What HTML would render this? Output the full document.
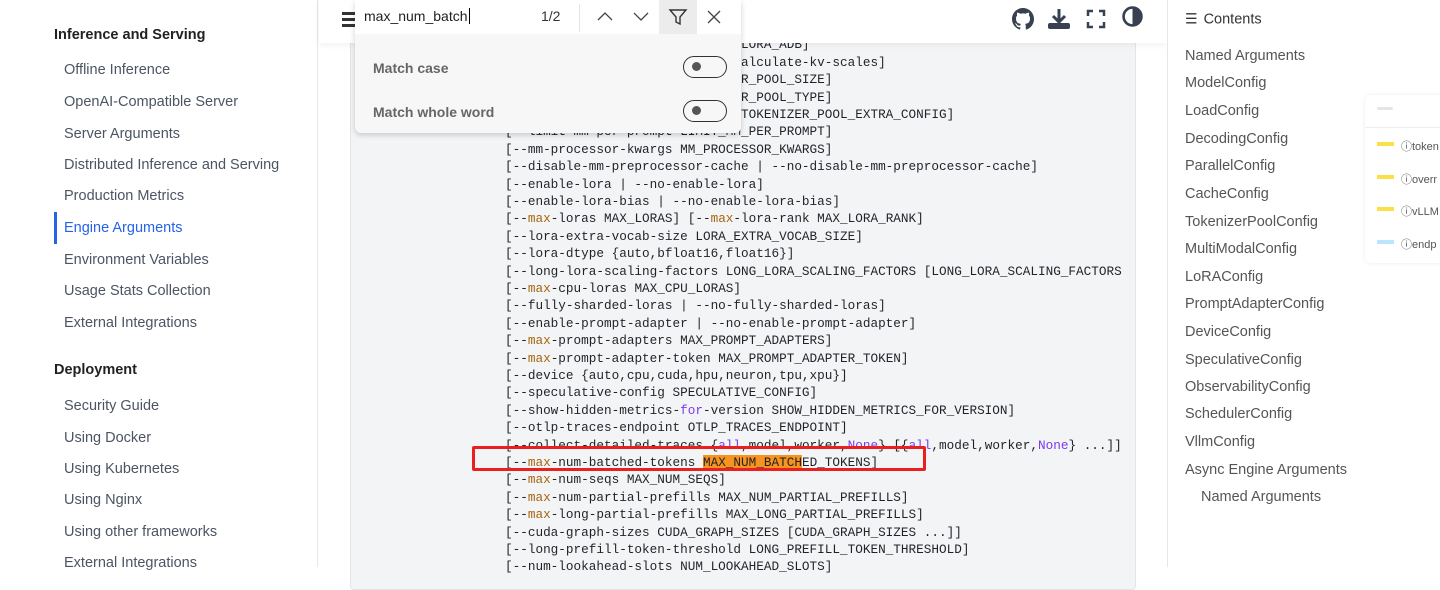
<!DOCTYPE html>
<html><head><meta charset="utf-8"><style>
*{margin:0;padding:0;box-sizing:border-box}
body{width:1440px;height:567px;overflow:hidden;background:#fff;font-family:"Liberation Sans",sans-serif;position:relative}
.side{position:absolute;left:0;top:0;width:318px;height:567px;border-right:1px solid #e5e7eb}
.side div{position:absolute;font-size:14.5px;color:#4b5563;white-space:nowrap;transform:translateY(-50%)}
.side .h{left:54px;font-weight:bold;color:#222}
.side .i{left:64px}
.side .a{color:#2563eb}
.bar{position:absolute;left:54px;top:212px;width:3px;height:32px;background:#2563eb}
.code{position:absolute;left:350px;top:30px;width:786px;height:560px;background:#f3f4f6;border:1px solid #e2e4e8;border-radius:4px}
pre{position:absolute;left:505px;top:36.3px;font-family:"Liberation Mono",monospace;font-size:12.7px;line-height:17.4px;color:#1f2328}
.m{color:#a6640f}.p{color:#7c3aed}
.hl{background:#f7931e}
.head{position:absolute;left:319px;top:0;width:848px;height:43px;background:#fff;box-shadow:0 2px 6px rgba(0,0,0,.06)}
.toc{position:absolute;left:1167px;top:0;width:273px;height:567px;border-left:1px solid #e5e7eb;background:#fff}
.toc div{position:absolute;left:17px;font-size:14.5px;color:#555;white-space:nowrap;transform:translateY(-50%)}
.pop{position:absolute;left:355px;top:0;width:386px;height:133px;background:#f7f7f7;box-shadow:0 2px 6px rgba(0,0,0,.18);border-radius:0 0 6px 6px}
.pop .top{position:absolute;left:0;top:0;width:386px;height:34px;background:#fff}
.tog{position:absolute;left:328px;width:44px;height:22px;border:1.5px solid #333;border-radius:11px}
.tog:after{content:"";position:absolute;left:8px;top:5px;width:9px;height:9px;border-radius:50%;background:#555}
.float{position:absolute;left:1365px;top:95px;width:80px;height:168px;background:#fff;border-radius:6px;box-shadow:0 0 4px rgba(0,0,0,.08)}
</style></head><body>
<div class="side">
<div class="h" style="top:35px">Inference and Serving</div>
<div class="i" style="top:70px">Offline Inference</div>
<div class="i" style="top:102px">OpenAI-Compatible Server</div>
<div class="i" style="top:134px">Server Arguments</div>
<div class="i" style="top:165px">Distributed Inference and Serving</div>
<div class="i" style="top:196px">Production Metrics</div>
<div class="i a" style="top:228px">Engine Arguments</div>
<div class="i" style="top:260px">Environment Variables</div>
<div class="i" style="top:291px">Usage Stats Collection</div>
<div class="i" style="top:323px">External Integrations</div>
<div class="h" style="top:370px">Deployment</div>
<div class="i" style="top:406px">Security Guide</div>
<div class="i" style="top:438px">Using Docker</div>
<div class="i" style="top:469px">Using Kubernetes</div>
<div class="i" style="top:500px">Using Nginx</div>
<div class="i" style="top:532px">Using other frameworks</div>
<div class="i" style="top:563px">External Integrations</div>
</div>
<div class="bar"></div>
<div class="code"></div>
<pre>[--qlora-adapter-name-or-path QLORA_ADB]
[--calculate-kv-scales | --no-calculate-kv-scales]
[--tokenizer-pool-size TOKENIZER_POOL_SIZE]
[--tokenizer-pool-type TOKENIZER_POOL_TYPE]
[--tokenizer-pool-extra-config TOKENIZER_POOL_EXTRA_CONFIG]
[--limit-mm-per-prompt LIMIT_MM_PER_PROMPT]
[--mm-processor-kwargs MM_PROCESSOR_KWARGS]
[--disable-mm-preprocessor-cache | --no-disable-mm-preprocessor-cache]
[--enable-lora | --no-enable-lora]
[--enable-lora-bias | --no-enable-lora-bias]
[--<span class="m">max</span>-loras MAX_LORAS] [--<span class="m">max</span>-lora-rank MAX_LORA_RANK]
[--lora-extra-vocab-size LORA_EXTRA_VOCAB_SIZE]
[--lora-dtype {auto,bfloat16,float16}]
[--long-lora-scaling-factors LONG_LORA_SCALING_FACTORS [LONG_LORA_SCALING_FACTORS
[--<span class="m">max</span>-cpu-loras MAX_CPU_LORAS]
[--fully-sharded-loras | --no-fully-sharded-loras]
[--enable-prompt-adapter | --no-enable-prompt-adapter]
[--<span class="m">max</span>-prompt-adapters MAX_PROMPT_ADAPTERS]
[--<span class="m">max</span>-prompt-adapter-token MAX_PROMPT_ADAPTER_TOKEN]
[--device {auto,cpu,cuda,hpu,neuron,tpu,xpu}]
[--speculative-config SPECULATIVE_CONFIG]
[--show-hidden-metrics-<span class="p">for</span>-version SHOW_HIDDEN_METRICS_FOR_VERSION]
[--otlp-traces-endpoint OTLP_TRACES_ENDPOINT]
[--collect-detailed-traces {<span class="p">all</span>,model,worker,<span class="p">None</span>} [{<span class="p">all</span>,model,worker,<span class="p">None</span>} ...]]
[--<span class="m">max</span>-num-batched-tokens <span class="hl">MAX_NUM_BATCH</span>ED_TOKENS]
[--<span class="m">max</span>-num-seqs MAX_NUM_SEQS]
[--<span class="m">max</span>-num-partial-prefills MAX_NUM_PARTIAL_PREFILLS]
[--<span class="m">max</span>-long-partial-prefills MAX_LONG_PARTIAL_PREFILLS]
[--cuda-graph-sizes CUDA_GRAPH_SIZES [CUDA_GRAPH_SIZES ...]]
[--long-prefill-token-threshold LONG_PREFILL_TOKEN_THRESHOLD]
[--num-lookahead-slots NUM_LOOKAHEAD_SLOTS]</pre>
<div style="position:absolute;left:472px;top:446px;width:454px;height:25px;border:3px solid #e8201f;border-radius:2px"></div>
<div class="head">
<div style="position:absolute;left:23px;top:12px;width:13px;height:2.5px;background:#333;box-shadow:0 6px 0 #333,0 12px 0 #333"></div>
<svg style="position:absolute;left:693px;top:8px" width="22" height="22" viewBox="0 0 16 16"><path fill="#374151" d="M8 0C3.58 0 0 3.58 0 8c0 3.54 2.29 6.53 5.47 7.59.4.07.55-.17.55-.38v-1.34c-2.23.48-2.7-1.07-2.7-1.07-.36-.92-.89-1.17-.89-1.17-.73-.5.05-.49.05-.49.8.06 1.23.82 1.23.82.72 1.23 1.88.87 2.34.67.07-.52.28-.87.51-1.07-1.78-.2-3.64-.89-3.64-3.95 0-.87.31-1.59.82-2.15-.08-.2-.36-1.02.08-2.12 0 0 .67-.21 2.2.82a7.6 7.6 0 014 0c1.53-1.04 2.2-.82 2.2-.82.44 1.1.16 1.92.08 2.12.51.56.82 1.27.82 2.15 0 3.07-1.87 3.75-3.65 3.95.29.25.54.73.54 1.48v2.2c0 .21.15.46.55.38A8 8 0 0016 8c0-4.42-3.58-8-8-8z"/></svg>
<svg style="position:absolute;left:728px;top:8px" width="24" height="22" viewBox="0 0 24 22"><path d="M12 1v13M6 8l6 6 6-6" stroke="#374151" stroke-width="3" fill="none"/><rect x="1" y="15" width="22" height="6" rx="2" fill="#374151"/></svg>
<svg style="position:absolute;left:767px;top:9px" width="20" height="20" viewBox="0 0 20 20"><path d="M2 7V2h5M13 2h5v5M18 13v5h-5M7 18H2v-5" stroke="#374151" stroke-width="2.5" fill="none"/></svg>
<svg style="position:absolute;left:803px;top:6px" width="21" height="21" viewBox="0 0 20 20"><circle cx="10" cy="10" r="8.5" stroke="#374151" stroke-width="2.5" fill="none"/><path d="M10 1.5a8.5 8.5 0 010 17z" fill="#374151"/></svg>
</div>
<div class="pop">
<div class="top">
<div style="position:absolute;left:9px;top:8px;font-size:14px;color:#222">max_num_batch<span style="border-left:1px solid #000;margin-left:1px"></span></div>
<div style="position:absolute;left:186px;top:8px;font-size:14px;color:#333">1/2</div>
<div style="position:absolute;left:224px;top:4px;width:1px;height:28px;background:#e5e5e5"></div>
<svg style="position:absolute;left:240px;top:8px" width="20" height="16"><path d="M3 12l7-7 7 7" stroke="#444" stroke-width="1.3" fill="none"/></svg>
<svg style="position:absolute;left:276px;top:8px" width="20" height="16"><path d="M3 5l7 7 7-7" stroke="#444" stroke-width="1.3" fill="none"/></svg>
<div style="position:absolute;left:304px;top:0;width:38px;height:34px;background:#ececec"></div>
<svg style="position:absolute;left:313px;top:7px" width="20" height="20"><path d="M2 3h16l-6 7v7l-4-2v-5z" stroke="#333" stroke-width="1.4" fill="none"/></svg>
<svg style="position:absolute;left:350px;top:8px" width="18" height="18"><path d="M3 3l12 12M15 3L3 15" stroke="#444" stroke-width="1.3"/></svg>
</div>
<div style="position:absolute;left:18px;top:60px;font-size:14px;color:#666;font-weight:bold">Match case</div>
<div style="position:absolute;left:18px;top:104px;font-size:14px;color:#666;font-weight:bold">Match whole word</div>
<div class="tog" style="top:56px"></div>
<div class="tog" style="top:100px"></div>
</div>
<div class="toc">
<div style="top:19px;color:#333"><span style="font-size:14px;margin-right:6px">☰</span>Contents</div>
<div style="top:56px">Named Arguments</div>
<div style="top:83px">ModelConfig</div>
<div style="top:111px">LoadConfig</div>
<div style="top:139px">DecodingConfig</div>
<div style="top:166px">ParallelConfig</div>
<div style="top:194px">CacheConfig</div>
<div style="top:222px">TokenizerPoolConfig</div>
<div style="top:249px">MultiModalConfig</div>
<div style="top:277px">LoRAConfig</div>
<div style="top:304px">PromptAdapterConfig</div>
<div style="top:332px">DeviceConfig</div>
<div style="top:360px">SpeculativeConfig</div>
<div style="top:387px">ObservabilityConfig</div>
<div style="top:414px">SchedulerConfig</div>
<div style="top:442px">VllmConfig</div>
<div style="top:470px">Async Engine Arguments</div>
<div style="top:497px;left:33px">Named Arguments</div>
</div>
<div class="float">
<div style="position:absolute;left:12px;top:12px;width:16px;height:3px;background:#e5e5e5;border-radius:2px"></div>
<div style="position:absolute;left:0;top:32px;width:80px;height:1px;background:#eee"></div>
<div style="position:absolute;left:12px;top:47px;width:17px;height:4px;background:#fde047"></div>
<div style="position:absolute;left:36px;top:43px;font-size:11px;color:#555">ⓘtoken</div>
<div style="position:absolute;left:12px;top:80px;width:17px;height:4px;background:#fde047"></div>
<div style="position:absolute;left:36px;top:76px;font-size:11px;color:#555">ⓘoverr</div>
<div style="position:absolute;left:12px;top:112px;width:17px;height:4px;background:#fde047"></div>
<div style="position:absolute;left:36px;top:108px;font-size:11px;color:#555">ⓘvLLM</div>
<div style="position:absolute;left:12px;top:145px;width:17px;height:4px;background:#bae6fd"></div>
<div style="position:absolute;left:36px;top:141px;font-size:11px;color:#555">ⓘendp</div>
</div>
</body></html>
